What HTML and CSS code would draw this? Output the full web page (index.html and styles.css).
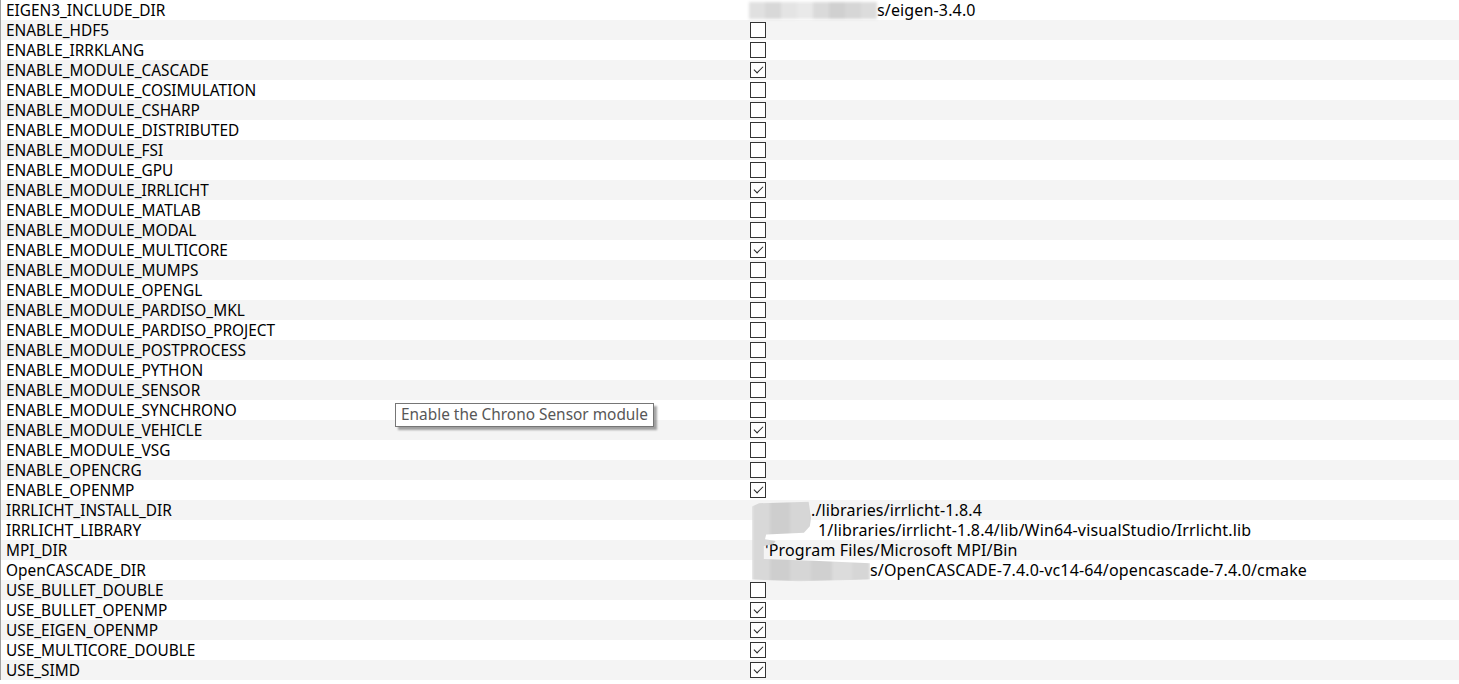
FILE: index.html
```html
<!DOCTYPE html>
<html>
<head>
<meta charset="utf-8">
<link rel="stylesheet" href="styles.css">
</head>
<body>
<div class="table">
  <div class="row"><div class="name">EIGEN3_INCLUDE_DIR</div><div class="val"><span class="gap g0"></span>s/eigen-3.4.0</div></div>
  <div class="row"><div class="name">ENABLE_HDF5</div><div class="val"><span class="cb"></span></div></div>
  <div class="row"><div class="name">ENABLE_IRRKLANG</div><div class="val"><span class="cb"></span></div></div>
  <div class="row"><div class="name">ENABLE_MODULE_CASCADE</div><div class="val"><span class="cb on"></span></div></div>
  <div class="row"><div class="name">ENABLE_MODULE_COSIMULATION</div><div class="val"><span class="cb"></span></div></div>
  <div class="row"><div class="name">ENABLE_MODULE_CSHARP</div><div class="val"><span class="cb"></span></div></div>
  <div class="row"><div class="name">ENABLE_MODULE_DISTRIBUTED</div><div class="val"><span class="cb"></span></div></div>
  <div class="row"><div class="name">ENABLE_MODULE_FSI</div><div class="val"><span class="cb"></span></div></div>
  <div class="row"><div class="name">ENABLE_MODULE_GPU</div><div class="val"><span class="cb"></span></div></div>
  <div class="row"><div class="name">ENABLE_MODULE_IRRLICHT</div><div class="val"><span class="cb on"></span></div></div>
  <div class="row"><div class="name">ENABLE_MODULE_MATLAB</div><div class="val"><span class="cb"></span></div></div>
  <div class="row"><div class="name">ENABLE_MODULE_MODAL</div><div class="val"><span class="cb"></span></div></div>
  <div class="row"><div class="name">ENABLE_MODULE_MULTICORE</div><div class="val"><span class="cb on"></span></div></div>
  <div class="row"><div class="name">ENABLE_MODULE_MUMPS</div><div class="val"><span class="cb"></span></div></div>
  <div class="row"><div class="name">ENABLE_MODULE_OPENGL</div><div class="val"><span class="cb"></span></div></div>
  <div class="row"><div class="name">ENABLE_MODULE_PARDISO_MKL</div><div class="val"><span class="cb"></span></div></div>
  <div class="row"><div class="name">ENABLE_MODULE_PARDISO_PROJECT</div><div class="val"><span class="cb"></span></div></div>
  <div class="row"><div class="name">ENABLE_MODULE_POSTPROCESS</div><div class="val"><span class="cb"></span></div></div>
  <div class="row"><div class="name">ENABLE_MODULE_PYTHON</div><div class="val"><span class="cb"></span></div></div>
  <div class="row"><div class="name">ENABLE_MODULE_SENSOR</div><div class="val"><span class="cb"></span></div></div>
  <div class="row"><div class="name">ENABLE_MODULE_SYNCHRONO</div><div class="val"><span class="cb"></span></div></div>
  <div class="row"><div class="name">ENABLE_MODULE_VEHICLE</div><div class="val"><span class="cb on"></span></div></div>
  <div class="row"><div class="name">ENABLE_MODULE_VSG</div><div class="val"><span class="cb"></span></div></div>
  <div class="row"><div class="name">ENABLE_OPENCRG</div><div class="val"><span class="cb"></span></div></div>
  <div class="row"><div class="name">ENABLE_OPENMP</div><div class="val"><span class="cb on"></span></div></div>
  <div class="row"><div class="name">IRRLICHT_INSTALL_DIR</div><div class="val"><span class="gap g1"></span>./libraries/irrlicht-1.8.4</div></div>
  <div class="row"><div class="name">IRRLICHT_LIBRARY</div><div class="val"><span class="gap g2"></span>1/libraries/irrlicht-1.8.4/lib/Win64-visualStudio/Irrlicht.lib</div></div>
  <div class="row"><div class="name">MPI_DIR</div><div class="val"><span class="gap g3"></span>'Program Files/Microsoft MPI/Bin</div></div>
  <div class="row"><div class="name">OpenCASCADE_DIR</div><div class="val"><span class="gap g4"></span>s/OpenCASCADE-7.4.0-vc14-64/opencascade-7.4.0/cmake</div></div>
  <div class="row"><div class="name">USE_BULLET_DOUBLE</div><div class="val"><span class="cb"></span></div></div>
  <div class="row"><div class="name">USE_BULLET_OPENMP</div><div class="val"><span class="cb on"></span></div></div>
  <div class="row"><div class="name">USE_EIGEN_OPENMP</div><div class="val"><span class="cb on"></span></div></div>
  <div class="row"><div class="name">USE_MULTICORE_DOUBLE</div><div class="val"><span class="cb on"></span></div></div>
  <div class="row"><div class="name">USE_SIMD</div><div class="val"><span class="cb on"></span></div></div>
</div>

<div class="mask mask-top">
  <i class="t1"></i><i class="t2"></i><i class="t3"></i><i class="t4"></i><i class="t5"></i><i class="t6"></i><i class="t7"></i><i class="t8"></i>
</div>
<div class="mask mask-mid"></div>

<div class="tooltip">Enable the Chrono Sensor module</div>
</body>
</html>
```
FILE: styles.css
```css
html, body {
  margin: 0;
  padding: 0;
  background: #ffffff;
}
body {
  width: 1459px;
  height: 684px;
  overflow: hidden;
  position: relative;
  font-family: "Noto Sans", "Open Sans", sans-serif;
  font-size: 15.4px;
  color: #000;
}
.table {
  border-left: 1px solid #a0a0a0;
  display: flex;
  flex-direction: column;
}
.row {
  display: grid;
  grid-template-columns: 749px 1fr;
  height: 20px;
  background: #ffffff;
}
.row:nth-child(even) {
  background: #f4f4f4;
}
.name {
  padding-left: 5px;
  padding-top: 1px;
  line-height: 19px;
  white-space: nowrap;
}
.val {
  white-space: nowrap;
  display: flex;
  align-items: center;
  font-size: 16px;
  letter-spacing: 0.15px;
  padding-top: 1px;
  line-height: 19px;
}
.gap {
  display: inline-block;
  height: 1px;
  flex: none;
}
.g0 { width: 127px; }
.g1 { width: 61px; }
.g2 { width: 68px; }
.g3 { width: 15px; }
.g4 { width: 120px; }

.cb {
  width: 14px;
  height: 14px;
  margin-top: -1px;
  border: 1px solid #333333;
  background: #ffffff;
  display: inline-block;
  box-sizing: content-box;
  position: relative;
  flex: none;
}
.cb.on::after {
  content: "";
  position: absolute;
  left: 4.5px;
  top: 1px;
  width: 4px;
  height: 8px;
  border-right: 1.8px solid #222;
  border-bottom: 1.8px solid #222;
  transform: rotate(45deg);
}

.mask {
  position: absolute;
  filter: blur(1.5px);
}
.mask-top {
  left: 749px;
  top: 2px;
  width: 128px;
  height: 17px;
  display: flex;
}
.mask-top i { flex: 1; }
.t1 { background: #e0e0e0; }
.t2 { background: #d8d8d8; }
.t3 { background: #e4e4e4; }
.t4 { background: #e9e9e9; }
.t5 { background: #dadada; }
.t6 { background: #d0d0d0; }
.t7 { background: #d6d6d6; }
.t8 { background: #dcdcdc; }

.mask-mid {
  left: 752px;
  top: 500px;
  width: 118px;
  height: 82px;
  background:
    linear-gradient(90deg, #d8d8d8 0 15%, #cecece 15% 32%, #d6d6d6 32% 50%, #d0d0d0 50% 68%, #dcdcdc 68% 85%, #d6d6d6 85% 100%);
  clip-path: polygon(6% 4%, 48% 2%, 50% 22%, 49% 32%, 44% 40%, 12% 42%, 11% 48%, 20% 50%, 18% 54%, 10% 56%, 10% 72%, 52% 74%, 100% 77%, 100% 97%, 40% 99%, 0% 97%, 0% 8%);
}

.tooltip {
  position: absolute;
  left: 395px;
  top: 403px;
  height: 22px;
  line-height: 22px;
  padding: 0 5px;
  border: 1px solid #767676;
  background: #ffffff;
  color: #575757;
  font-size: 15.4px;
  box-shadow: 3px 3px 2px rgba(0,0,0,0.35);
  white-space: nowrap;
}
```
